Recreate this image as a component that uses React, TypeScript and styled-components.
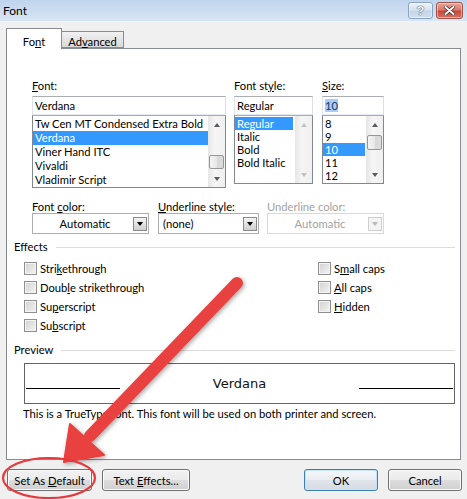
import React from "react";
import styled, { createGlobalStyle } from "styled-components";

const UI_FONT = `Lato, "Liberation Sans", sans-serif`;

const GlobalStyle = createGlobalStyle`
  html, body {
    margin:0;
    padding:0;
    background:#f0f0f0;
  }
  * { box-sizing:border-box; }
`;

const Dialog = styled.div`
  position:relative;
  width:467px;
  height:499px;
  overflow:hidden;
  background:#f0f0f0;
  font-family:${UI_FONT};
  font-size:11.2px;
  color:#000;
`;

const TitleBar = styled.div`
  height:22px;
  display:flex;
  justify-content:space-between;
  align-items:flex-start;
  background:linear-gradient(#bfd4ed, #d8e5f4);
  border-bottom:1px solid #eef3fa;
`;
const Title = styled.div`
  padding:3px 0 0 3px;
  line-height:16px;
  font-size:12px;
`;
const Caption = styled.div`
  display:flex;
  gap:3px;
  padding:2px 4px 0 0;
`;
const CaptionButton = styled.div<{ $close?: boolean }>`
  width:${p => (p.$close ? 27 : 25)}px;
  height:17px;
  border-radius:3px;
  display:flex;
  align-items:center;
  justify-content:center;
  border:1px solid ${p => (p.$close ? "#a3524a" : "#8ba4c3")};
  background:${p =>
    p.$close
      ? "linear-gradient(#eaa599, #d97a6c 45%, #c8483b 55%, #d6735f)"
      : "linear-gradient(#edf3fa, #d7e3f1 45%, #c3d5ea 55%, #d2e0f0)"};
  box-shadow:inset 0 0 0 1px rgba(255,255,255,0.45);
  color:#f6f9fd;
  font-family:"Liberation Sans", sans-serif;
  font-weight:bold;
  font-size:13px;
  text-shadow:0 0 1px #2d4563, 0 0 1px #2d4563;
`;

const Body = styled.div`
  padding-top:6px;
`;

const TabRow = styled.div`
  position:relative;
  z-index:1;
  display:flex;
  align-items:flex-end;
  height:20px;
  padding-left:6px;
`;
const Tab = styled.div<{ $active?: boolean }>`
  position:relative;
  z-index:${p => (p.$active ? 2 : 1)};
  width:${p => (p.$active ? 56 : 63)}px;
  height:${p => (p.$active ? 21 : 17)}px;
  margin-bottom:${p => (p.$active ? -1 : 0)}px;
  margin-left:${p => (p.$active ? 0 : -1)}px;
  padding-top:${p => (p.$active ? 5 : 2)}px;
  border:1px solid #898c95;
  border-bottom:${p => (p.$active ? "none" : "1px solid #898c95")};
  background:${p => (p.$active ? "#fff" : "linear-gradient(#f2f2f2, #e4e4e4 50%, #d9d9d9)")};
  line-height:15px;
  text-align:center;
`;

const U = styled.span`
  text-decoration:underline;
  text-underline-offset:1px;
`;

const Panel = styled.div`
  width:455px;
  height:412px;
  margin-left:6px;
  background:#fff;
  border:1px solid #898c95;
  padding:30px 5px 0 7px;
`;

const FieldRow = styled.div<{ $top?: number }>`
  display:flex;
  align-items:flex-start;
  margin:${p => p.$top ?? 0}px 0 0 18px;
`;
const Field = styled.div<{ $w: number; $gap: number }>`
  width:${p => p.$w}px;
  margin-right:${p => p.$gap}px;
  display:flex;
  flex-direction:column;
`;
const FieldLabel = styled.div<{ $gap: number; $disabled?: boolean }>`
  height:14px;
  line-height:14px;
  margin-bottom:${p => p.$gap}px;
  white-space:nowrap;
  color:${p => (p.$disabled ? "#a3a3a3" : "#000")};
`;

const TextBox = styled.div`
  height:19px;
  padding:0 2px;
  line-height:17px;
  border:1px solid;
  border-color:#abadb3 #dbdfe6 #e3e9ef #e2e3ea;
  background:#fff;
  white-space:nowrap;
`;
const Selection = styled.span`
  background:#a9cdf3;
  color:#14386b;
`;

const ListBox = styled.div<{ $h: number }>`
  height:${p => p.$h}px;
  display:flex;
  border:1px solid #828790;
  border-top-color:#abadb3;
  background:#fff;
`;
const ListItems = styled.div<{ $gap: number }>`
  flex:1;
  min-width:0;
  padding-top:1px;
  margin-right:${p => p.$gap}px;
  overflow:hidden;
`;
const ListItem = styled.div<{ $h: number; $selected?: boolean }>`
  height:${p => p.$h}px;
  line-height:${p => p.$h}px;
  padding-left:2px;
  white-space:nowrap;
  background:${p => (p.$selected ? "#3399ff" : "transparent")};
  color:${p => (p.$selected ? "#fff" : "#000")};
`;

const ScrollBar = styled.div`
  width:17px;
  flex:none;
  display:flex;
  flex-direction:column;
  background:linear-gradient(90deg, #e6e6e6, #f5f5f5 40%, #f0f0f0);
`;
const ScrollArrow = styled.div<{ $down?: boolean; $disabled?: boolean }>`
  height:17px;
  display:flex;
  align-items:center;
  justify-content:center;
  &::after {
    content:"";
    border-left:3.5px solid transparent;
    border-right:3.5px solid transparent;
    ${p => (p.$down ? "border-top" : "border-bottom")}:4px solid ${p => (p.$disabled ? "#c2c2c2" : "#5a5a5a")};
  }
`;
const ScrollTrack = styled.div`
  flex:1;
  display:flex;
  flex-direction:column;
`;
const ScrollThumb = styled.div<{ $top: number; $h: number }>`
  height:${p => p.$h}px;
  margin:${p => p.$top}px 1px 0;
  border:1px solid #979797;
  border-radius:2px;
  background:linear-gradient(90deg, #f4f4f4, #e8e8e8 50%, #d8d8d8 51%, #dcdcdc);
`;

const Combo = styled.div<{ $disabled?: boolean }>`
  height:21px;
  display:flex;
  align-items:center;
  padding:0 1px 0 4px;
  border:1px solid ${p => (p.$disabled ? "#d9d9d9" : "#abadb3")};
  background:#fff;
  color:${p => (p.$disabled ? "#a3a3a3" : "#000")};
`;
const ComboText = styled.div<{ $center?: boolean }>`
  flex:1;
  text-align:${p => (p.$center ? "center" : "left")};
  white-space:nowrap;
`;
const ComboButton = styled.div<{ $disabled?: boolean }>`
  width:14px;
  height:14px;
  display:flex;
  align-items:center;
  justify-content:center;
  border:1px solid ${p => (p.$disabled ? "#cfcfcf" : "#8a8a8a")};
  background:${p => (p.$disabled ? "#f4f4f4" : "linear-gradient(#f4f4f4, #e2e2e2 50%, #cfcfcf)")};
  &::after {
    content:"";
    border-left:3.5px solid transparent;
    border-right:3.5px solid transparent;
    border-top:4px solid ${p => (p.$disabled ? "#b8b8b8" : "#000")};
  }
`;

const GroupHeader = styled.div<{ $top: number }>`
  display:flex;
  align-items:center;
  height:14px;
  line-height:14px;
  margin-top:${p => p.$top}px;
  &::after {
    content:"";
    flex:1;
    height:1px;
    margin-left:8px;
    background:#dcdcdc;
  }
`;

const Effects = styled.div`
  display:flex;
  margin:5px 0 0 10px;
`;
const EffectColumn = styled.div<{ $w?: number }>`
  width:${p => (p.$w ? `${p.$w}px` : "auto")};
  display:flex;
  flex-direction:column;
`;
const CheckRow = styled.div`
  height:19px;
  display:flex;
  align-items:center;
  gap:3px;
  white-space:nowrap;
`;
const CheckBox = styled.span`
  width:13px;
  height:13px;
  border:1px solid #8e8f8f;
  background:linear-gradient(135deg, #d2d2d2, #f3f3f3);
  box-shadow:inset 0 0 0 1px #f4f4f4;
`;
const CheckText = styled.span`
  line-height:15px;
`;

const PreviewBox = styled.div`
  height:41px;
  margin:6px 0 0 10px;
  padding:0 1px;
  display:flex;
  align-items:center;
  justify-content:space-between;
  border:1px solid #646464;
`;
const PreviewLine = styled.div`
  width:94px;
  height:1px;
  margin-top:10px;
  background:#000;
`;
const PreviewText = styled.div`
  font-family:"DejaVu Sans", Verdana, sans-serif;
  font-size:13px;
  color:#111;
`;
const Note = styled.div`
  margin:2px 0 0 9px;
  line-height:15px;
  white-space:nowrap;
`;

const ButtonRow = styled.div`
  display:flex;
  align-items:center;
  gap:10px;
  margin-top:9px;
  padding:0 5px 0 7px;
`;
const Spacer = styled.div`
  flex:1;
`;
const PushButton = styled.div<{ $w: number; $default?: boolean }>`
  width:${p => p.$w}px;
  height:22px;
  display:flex;
  align-items:center;
  justify-content:center;
  border-radius:3px;
  border:1px solid ${p => (p.$default ? "#3c7fb1" : "#707070")};
  background:${p =>
    p.$default
      ? "linear-gradient(#f4f7fa, #eaeef2 48%, #dfe5ea 52%, #d4dbe2)"
      : "linear-gradient(#f2f2f2, #ebebeb 48%, #dddddd 52%, #cfcfcf)"};
  box-shadow:inset 0 0 0 1px ${p => (p.$default ? "#c6e3f6" : "#fbfbfb")};
  white-space:nowrap;
`;
const ButtonText = styled.span`
  line-height:15px;
`;

const Annotation = styled.svg`
  position:absolute;
  left:0;
  top:0;
  width:467px;
  height:499px;
  pointer-events:none;
`;

const fonts = ["Tw Cen MT Condensed Extra Bold", "Verdana", "Viner Hand ITC", "Vivaldi", "Vladimir Script"];
const styles = ["Regular", "Italic", "Bold", "Bold Italic"];
const sizes = ["8", "9", "10", "11", "12"];

interface ScrollProps {
  thumb?: { top: number; h: number };
  disabled?: boolean;
}
const Scroller = ({ thumb, disabled }: ScrollProps) => (
  <ScrollBar>
    <ScrollArrow $disabled={disabled} />
    <ScrollTrack>{thumb && <ScrollThumb $top={thumb.top} $h={thumb.h} />}</ScrollTrack>
    <ScrollArrow $down $disabled={disabled} />
  </ScrollBar>
);

const Check = ({ children }: { children: React.ReactNode }) => (
  <CheckRow>
    <CheckBox />
    <CheckText>{children}</CheckText>
  </CheckRow>
);

const App = () => {
  return (
    <>
      <GlobalStyle />
      <Dialog>
        <TitleBar>
          <Title>Font</Title>
          <Caption>
            <CaptionButton>?</CaptionButton>
            <CaptionButton $close>
              <svg width="11" height="9" viewBox="0 0 11 9">
                <path d="M1.5 1 L9.5 8 M9.5 1 L1.5 8" stroke="#3b1f1c" strokeWidth="3.4" strokeLinecap="round" />
                <path d="M1.5 1 L9.5 8 M9.5 1 L1.5 8" stroke="#fff" strokeWidth="2" strokeLinecap="round" />
              </svg>
            </CaptionButton>
          </Caption>
        </TitleBar>

        <Body>
          <TabRow>
            <Tab $active>Fo<U>n</U>t</Tab>
            <Tab>Ad<U>v</U>anced</Tab>
          </TabRow>

          <Panel>
            <FieldRow>
              <Field $w={194} $gap={8}>
                <FieldLabel $gap={3}><U>F</U>ont:</FieldLabel>
                <TextBox>Verdana</TextBox>
                <ListBox $h={73}>
                  <ListItems $gap={0}>
                    {fonts.map(f => (
                      <ListItem key={f} $h={14} $selected={f === "Verdana"}>{f}</ListItem>
                    ))}
                  </ListItems>
                  <Scroller thumb={{ top: 22, h: 14 }} />
                </ListBox>
              </Field>
              <Field $w={79} $gap={9}>
                <FieldLabel $gap={3}>Font st<U>y</U>le:</FieldLabel>
                <TextBox>Regular</TextBox>
                <ListBox $h={69}>
                  <ListItems $gap={2}>
                    {styles.map(s => (
                      <ListItem key={s} $h={13} $selected={s === "Regular"}>{s}</ListItem>
                    ))}
                  </ListItems>
                  <Scroller disabled />
                </ListBox>
              </Field>
              <Field $w={62} $gap={0}>
                <FieldLabel $gap={3}><U>S</U>ize:</FieldLabel>
                <TextBox><Selection>10</Selection></TextBox>
                <ListBox $h={69}>
                  <ListItems $gap={1}>
                    {sizes.map(s => (
                      <ListItem key={s} $h={13} $selected={s === "10"}>{s}</ListItem>
                    ))}
                  </ListItems>
                  <Scroller thumb={{ top: 2, h: 15 }} />
                </ListBox>
              </Field>
            </FieldRow>

            <FieldRow $top={12}>
              <Field $w={117} $gap={9}>
                <FieldLabel $gap={-1}>Font <U>c</U>olor:</FieldLabel>
                <Combo>
                  <ComboText $center>Automatic</ComboText>
                  <ComboButton />
                </Combo>
              </Field>
              <Field $w={101} $gap={8}>
                <FieldLabel $gap={-1}><U>U</U>nderline style:</FieldLabel>
                <Combo>
                  <ComboText>(none)</ComboText>
                  <ComboButton />
                </Combo>
              </Field>
              <Field $w={117} $gap={0}>
                <FieldLabel $gap={-1} $disabled>Underline color:</FieldLabel>
                <Combo $disabled>
                  <ComboText $center>Automatic</ComboText>
                  <ComboButton $disabled />
                </Combo>
              </Field>
            </FieldRow>

            <GroupHeader $top={6}>Effects</GroupHeader>
            <Effects>
              <EffectColumn $w={294}>
                <Check>Stri<U>k</U>ethrough</Check>
                <Check>Doub<U>l</U>e strikethrough</Check>
                <Check>Su<U>p</U>erscript</Check>
                <Check>Su<U>b</U>script</Check>
              </EffectColumn>
              <EffectColumn>
                <Check>S<U>m</U>all caps</Check>
                <Check><U>A</U>ll caps</Check>
                <Check><U>H</U>idden</Check>
              </EffectColumn>
            </Effects>

            <GroupHeader $top={8}>Preview</GroupHeader>
            <PreviewBox>
              <PreviewLine />
              <PreviewText>Verdana</PreviewText>
              <PreviewLine />
            </PreviewBox>
            <Note>This is a TrueType font. This font will be used on both printer and screen.</Note>
          </Panel>

          <ButtonRow>
            <PushButton $w={85}><ButtonText>Set As <U>D</U>efault</ButtonText></PushButton>
            <PushButton $w={88}><ButtonText>Text <U>E</U>ffects...</ButtonText></PushButton>
            <Spacer />
            <PushButton $w={74} $default><ButtonText>OK</ButtonText></PushButton>
            <PushButton $w={74}><ButtonText>Cancel</ButtonText></PushButton>
          </ButtonRow>
        </Body>

        <Annotation viewBox="0 0 467 499">
          <defs>
            <filter id="arrowShadow" x="-20%" y="-20%" width="140%" height="140%">
              <feDropShadow dx="1.5" dy="1.5" stdDeviation="2" floodColor="#000" floodOpacity="0.35" />
            </filter>
          </defs>
          <g filter="url(#arrowShadow)" fill="#e9403f" stroke="#e9403f">
            <line x1="237" y1="283" x2="90" y2="436" strokeWidth="12" strokeLinecap="round" />
            <polygon points="64,462 70,424 104,455" strokeWidth="2" strokeLinejoin="round" />
          </g>
          <ellipse cx="49" cy="478" rx="46" ry="20" fill="none" stroke="#e5393d" strokeWidth="2.2" />
        </Annotation>
      </Dialog>
    </>
  );
};

export default App;
